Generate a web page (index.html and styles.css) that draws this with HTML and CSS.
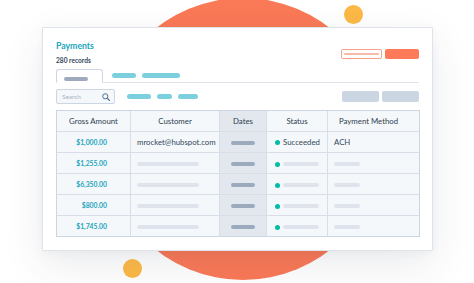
FILE: index.html
```html
<!DOCTYPE html>
<html>
<head>
<meta charset="utf-8">
<link rel="stylesheet" href="styles.css">
</head>
<body>
<div class="stage">
  <div class="blob"></div>
  <div class="dot dot-top"></div>
  <div class="dot dot-bottom"></div>

  <div class="card">
    <div class="card-head">
      <div>
        <div class="title">Payments</div>
        <div class="records">280 records</div>
      </div>
      <div class="actions">
        <span class="btn-outline"><span class="btn-line"></span></span>
        <span class="btn-fill"></span>
      </div>
    </div>

    <div class="tabs">
      <div class="tab"><span class="pill pill-gray"></span></div>
      <span class="pill pill-teal w24 first"></span>
      <span class="pill pill-teal w38"></span>
    </div>

    <div class="toolbar">
      <div class="search">
        <span class="search-text">Search</span>
        <svg class="search-icon" width="8" height="8" viewBox="0 0 8 8"><circle cx="3.3" cy="3.3" r="2.6" fill="none" stroke="#516f90" stroke-width="1"/><line x1="5.2" y1="5.2" x2="7.5" y2="7.5" stroke="#516f90" stroke-width="1.1" stroke-linecap="round"/></svg>
      </div>
      <span class="pill pill-teal w24 first-tool"></span>
      <span class="pill pill-teal w15"></span>
      <span class="pill pill-teal w20"></span>
      <span class="gray-btn push"></span>
      <span class="gray-btn"></span>
    </div>

    <table class="grid">
      <colgroup>
        <col class="c1"><col class="c2"><col class="c3"><col class="c4"><col class="c5">
      </colgroup>
      <thead>
        <tr>
          <th>Gross Amount</th>
          <th>Customer</th>
          <th class="dates">Dates</th>
          <th>Status</th>
          <th class="pm">Payment Method</th>
        </tr>
      </thead>
      <tbody>
        <tr>
          <td class="amt">$1,000.00</td>
          <td class="cust">mrocket@hubspot.com</td>
          <td class="dates"><span class="bar bar-date"></span></td>
          <td class="status"><span class="gdot"></span><span class="txt">Succeeded</span></td>
          <td class="method">ACH</td>
        </tr>
        <tr>
          <td class="amt">$1,255.00</td>
          <td class="cust"><span class="bar bar-cust"></span></td>
          <td class="dates"><span class="bar bar-date"></span></td>
          <td class="status"><span class="gdot"></span><span class="bar bar-status"></span></td>
          <td class="method"><span class="bar bar-method"></span></td>
        </tr>
        <tr>
          <td class="amt">$6,350.00</td>
          <td class="cust"><span class="bar bar-cust"></span></td>
          <td class="dates"><span class="bar bar-date"></span></td>
          <td class="status"><span class="gdot"></span><span class="bar bar-status"></span></td>
          <td class="method"><span class="bar bar-method"></span></td>
        </tr>
        <tr>
          <td class="amt">$800.00</td>
          <td class="cust"><span class="bar bar-cust"></span></td>
          <td class="dates"><span class="bar bar-date"></span></td>
          <td class="status"><span class="gdot"></span><span class="bar bar-status"></span></td>
          <td class="method"><span class="bar bar-method"></span></td>
        </tr>
        <tr>
          <td class="amt">$1,745.00</td>
          <td class="cust"><span class="bar bar-cust"></span></td>
          <td class="dates"><span class="bar bar-date"></span></td>
          <td class="status"><span class="gdot"></span><span class="bar bar-status"></span></td>
          <td class="method"><span class="bar bar-method"></span></td>
        </tr>
      </tbody>
    </table>
  </div>
</div>
</body>
</html>
```

FILE: styles.css
```css
html, body {
  margin: 0;
  padding: 0;
  background: #ffffff;
}
body {
  font-family: "Lato", "Open Sans", sans-serif;
  color: #33475b;
}
.stage {
  position: relative;
  width: 474px;
  height: 283px;
  overflow: hidden;
  box-sizing: border-box;
  padding: 27px 0 0 42px;
}
.blob {
  position: absolute;
  left: 102px;
  top: -2px;
  width: 282px;
  height: 282px;
  border-radius: 50%;
  background: #fa7957;
}
.dot {
  position: absolute;
  width: 19px;
  height: 19px;
  border-radius: 50%;
  background: #fdb946;
}
.dot-top { left: 344px; top: 5px; }
.dot-bottom { left: 123px; top: 259px; }

.card {
  position: relative;
  width: 391px;
  box-sizing: border-box;
  background: #fff;
  border: 1px solid #dfe3eb;
  border-radius: 1px;
  padding: 13px 13px 13px 13px;
  box-shadow: 0 14px 40px rgba(45, 62, 80, 0.10), 0 2px 8px rgba(45, 62, 80, 0.04);
}
.card-head {
  display: flex;
  justify-content: space-between;
  align-items: flex-start;
}
.title {
  font-size: 8.7px;
  line-height: 10px;
  font-weight: 700;
  color: #1ba6bd;
}
.records {
  margin-top: 5px;
  font-size: 6.6px;
  line-height: 8px;
  font-weight: 700;
  color: #33475b;
}
.actions {
  display: flex;
  gap: 3px;
  margin-top: 8px;
}
.btn-outline {
  width: 41px;
  height: 10px;
  box-sizing: border-box;
  border: 1px solid #f7a08a;
  border-radius: 2px;
  display: flex;
  align-items: center;
  padding: 0 2px;
}
.btn-line {
  display: block;
  width: 100%;
  height: 2px;
  background: #f9b9a7;
  border-radius: 1px;
}
.btn-fill {
  width: 34px;
  height: 10px;
  border-radius: 2px;
  background: #ff7a59;
}

.tabs {
  margin-top: 5px;
  height: 13px;
  display: flex;
  align-items: center;
  border-bottom: 1px solid #dfe3eb;
}
.tab {
  align-self: flex-start;
  width: 47px;
  height: 14px;
  box-sizing: border-box;
  margin-bottom: -1px;
  border: 1px solid #cbd6e2;
  border-bottom: 1px solid #fff;
  border-radius: 3px 3px 0 0;
  background: #fff;
  padding: 7px 0 0 7px;
}
.pill {
  display: block;
  height: 5px;
  border-radius: 3px;
}
.pill-gray {
  width: 24px;
  height: 4px;
  background: #9eaabe;
}
.pill-teal { background: #7ccfdc; }
.w24 { width: 24px; }
.w38 { width: 38px; }
.w15 { width: 15px; }
.w20 { width: 20px; }
.tabs .first { margin-left: 9px; }
.tabs .pill-teal + .pill-teal { margin-left: 6px; }

.toolbar {
  margin-top: 6px;
  height: 15px;
  display: flex;
  align-items: center;
}
.search {
  width: 59px;
  height: 15px;
  box-sizing: border-box;
  border: 1px solid #cbd6e2;
  border-radius: 2px;
  background: #f5f8fa;
  display: flex;
  align-items: center;
  justify-content: space-between;
  padding: 0 4px 0 5px;
}
.search-text {
  font-size: 6.4px;
  color: #a3b0c1;
}
.search-icon { display: block; }
.toolbar .first-tool { margin-left: 12px; }
.toolbar .pill-teal + .pill-teal { margin-left: 6px; }
.gray-btn {
  width: 37px;
  height: 11px;
  border-radius: 2px;
  background: #cbd6e2;
}
.gray-btn + .gray-btn { margin-left: 3px; }
.push { margin-left: auto; }

.grid {
  margin-top: 6px;
  width: 363px;
  table-layout: fixed;
  border-collapse: separate;
  border-spacing: 0;
  border-top: 1px solid #cbd6e2;
  border-left: 1px solid #cbd6e2;
}
.c1 { width: 74px; }
.c2 { width: 89px; }
.c3 { width: 47px; }
.c4 { width: 61px; }
.c5 { width: 92px; }
.grid th, .grid td {
  padding: 0;
  border-right: 1px solid #d7dee7;
  border-bottom: 1px solid #d7dee7;
  background: #f5f8fa;
  box-sizing: border-box;
  white-space: nowrap;
}
.grid th:last-child, .grid td:last-child { border-right-color: #cbd6e2; }
.grid tbody tr:last-child td { border-bottom-color: #cbd6e2; }
.grid th {
  height: 21px;
  font-size: 7.8px;
  font-weight: 400;
  color: #2d3e50;
  text-align: center;
}
.grid th.pm {
  text-align: left;
  padding-left: 11px;
}
.grid td {
  height: 21px;
  font-size: 7.8px;
  color: #33475b;
  vertical-align: middle;
}
.grid .dates { background: #e3e7ee; text-align: center; }
.amt {
  text-align: right;
  padding-right: 23px !important;
  font-weight: 700;
  font-size: 6.8px !important;
  color: #23a5bd !important;
}
.cust { padding-left: 6px !important; }
.method { padding-left: 6px !important; }
.bar {
  display: inline-block;
  height: 4px;
  border-radius: 2px;
  vertical-align: middle;
}
.bar-cust { width: 62px; background: #dfe3eb; }
.bar-date { width: 24px; background: #9caabd; }
.bar-status { width: 36px; background: #dfe3eb; }
.bar-method { width: 26px; background: #dfe3eb; }
.status {
  padding-left: 8px !important;
}
.status .gdot {
  display: inline-block;
  width: 5px;
  height: 5px;
  border-radius: 50%;
  background: #00bda5;
  vertical-align: middle;
  margin-right: 3px;
}
.status .txt { vertical-align: middle; }
.status .bar { vertical-align: middle; }
```
